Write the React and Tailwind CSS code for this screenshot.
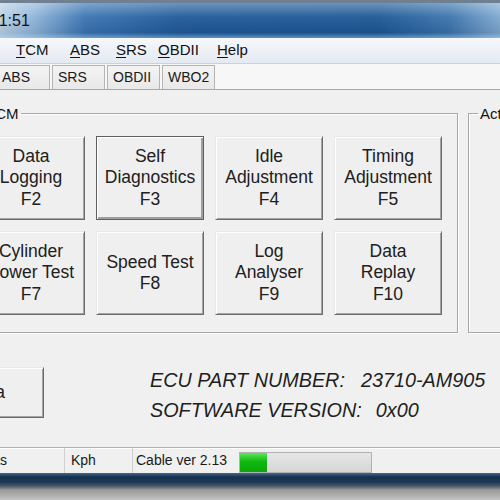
import React from 'react';

const row1 = [
  ['Data', 'Logging', 'F2'],
  ['Self', 'Diagnostics', 'F3'],
  ['Idle', 'Adjustment', 'F4'],
  ['Timing', 'Adjustment', 'F5'],
];

const row2 = [
  ['Cylinder', 'Power Test', 'F7'],
  ['Speed Test', 'F8'],
  ['Log', 'Analyser', 'F9'],
  ['Data', 'Replay', 'F10'],
];

// underlined letter, rest, slot width
const menus = [
  ['E', 'CM', 'w-[54px] ml-[-38px]'],
  ['T', 'CM', 'w-[54px]'],
  ['A', 'BS', 'w-[46px]'],
  ['S', 'RS', 'w-[42px]'],
  ['O', 'BDII', 'w-[59px]'],
  ['H', 'elp', 'w-[40px]'],
];

function FnButton({ lines, focused }) {
  const edge = focused
    ? 'border-[#5f5f5f] shadow-[inset_1px_1px_0_#ffffff,inset_-2px_-2px_0_#a0a0a0]'
    : 'border-t-[#e8e8e8] border-l-[#e8e8e8] border-r-[#6b6b6b] border-b-[#6b6b6b] shadow-[inset_1px_1px_0_#ffffff,inset_-1px_-1px_0_#a3a3a3]';
  return (
    <button
      className={`w-[108px] h-[84px] border bg-[#efefef] flex flex-col items-center justify-center text-[17.5px] leading-[21.5px] text-[#202020] ${edge}`}
    >
      {lines.map((l, i) => (
        <span key={i} className="whitespace-nowrap">{l}</span>
      ))}
    </button>
  );
}

export default function App() {
  return (
    <div
      className="w-[500px] h-[500px] overflow-hidden bg-[#f0f0f0] flex flex-col"
      style={{ fontFamily: '"Liberation Sans", Arial, sans-serif' }}
    >
      {/* title bar */}
      <div className="h-[38px] shrink-0 border-t-[3px] border-[#6e8092] bg-[linear-gradient(to_bottom,rgba(255,255,255,0.35),rgba(255,255,255,0.05)_40%,rgba(0,0,0,0.08)_85%,rgba(160,200,235,0.5)),linear-gradient(to_right,#b9d0e6_0px,#8db3d8_35px,#3a74b2_85px,#1f5a9a_180px,#1d5896_380px,#3b74ad_450px,#7ea8d0_500px)] flex items-center">
        <span className="ml-[-9px] text-[16px] text-[#111]">11:51</span>
      </div>

      {/* menu bar */}
      <div className="h-[26px] shrink-0 bg-[linear-gradient(to_bottom,#f6f8fb,#e4eaf2)] border-b border-[#c9d1dc] flex items-center text-[15px] text-[#111]">
        {menus.map(([u, rest, w], i) => (
          <span key={i} className={`shrink-0 whitespace-nowrap ${w}`}>
            <span className="underline underline-offset-2">{u}</span>
            {rest}
          </span>
        ))}
      </div>

      {/* tab strip */}
      <div className="h-[26px] shrink-0 bg-[#f7f7f7] border-b border-[#a8a8a8] flex items-end text-[14px] text-[#1a1a1a]">
        {['ABS', 'SRS', 'OBDII', 'WBO2'].map((t, i) => (
          <div
            key={t}
            className={`h-[24px] border border-b-0 border-[#b4b4b4] bg-[linear-gradient(to_bottom,#f4f4f4,#e8e8e8)] flex items-center pl-[5px] ${i === 0 ? 'ml-[-4px] w-[54px]' : 'ml-[2px] w-[53px]'}`}
          >
            {t}
          </div>
        ))}
      </div>

      {/* main panel */}
      <div className="h-[357px] shrink-0 overflow-hidden pt-[14px] flex flex-col">
        <div className="flex gap-[10px]">
          <fieldset className="shrink-0 ml-[-39px] w-[497px] h-[229px] border border-[#a6a6a6] shadow-[inset_1px_1px_0_#ffffff,1px_1px_0_#ffffff] px-[15px]">
            <legend className="ml-[7px] px-[2px] text-[15px] leading-[19px] text-[#111]">TCM</legend>
            <div className="mt-[13px] flex flex-col gap-[11px]">
              <div className="flex gap-[11px]">
                {row1.map((l, i) => (
                  <FnButton key={i} lines={l} focused={i === 1} />
                ))}
              </div>
              <div className="flex gap-[11px]">
                {row2.map((l, i) => (
                  <FnButton key={i} lines={l} />
                ))}
              </div>
            </div>
          </fieldset>
          <fieldset className="shrink-0 w-[120px] h-[229px] border border-[#a6a6a6] shadow-[inset_1px_1px_0_#ffffff,1px_1px_0_#ffffff] pl-[9px]">
            <legend className="px-[2px] text-[15px] leading-[19px] text-[#111] whitespace-nowrap">Active Tests</legend>
          </fieldset>
        </div>

        <div className="flex items-start">
          <button className="shrink-0 ml-[-60px] mt-[34px] w-[104px] h-[51px] border border-t-[#e8e8e8] border-l-[#e8e8e8] border-r-[#6b6b6b] border-b-[#6b6b6b] shadow-[inset_1px_1px_0_#ffffff,inset_-1px_-1px_0_#a3a3a3] bg-[#efefef] flex items-center justify-end pr-[38px] text-[17.5px] text-[#202020]">
            Data
          </button>
          <div className="ml-[106px] mt-[32px] text-[19.8px] leading-[30px] italic text-[#1e1e1e] whitespace-nowrap">
            <div>
              ECU PART NUMBER:<span className="ml-[16px]">23710-AM905</span>
            </div>
            <div>
              SOFTWARE VERSION:<span className="ml-[14px]">0x00</span>
            </div>
          </div>
        </div>
      </div>

      {/* status bar */}
      <div className="h-[26px] shrink-0 border-t border-[#b4b4b4] shadow-[inset_0_1px_0_#ffffff] bg-[#f0f0f0] flex items-stretch text-[14px] text-[#1a1a1a]">
        <div className="w-[65px] shrink-0 border-r border-[#d0d0d0] flex items-center justify-end pr-[57px]">Bias</div>
        <div className="w-[68px] shrink-0 border-r border-[#d0d0d0] flex items-center pl-[6px]">Kph</div>
        <div className="w-[106px] shrink-0 flex items-center pl-[3px] whitespace-nowrap">Cable ver 2.13</div>
        <div className="w-[133px] shrink-0 mt-[4px] border border-[#b2b2b2] bg-[linear-gradient(to_bottom,#e6e6e6,#d6d6d6)] flex">
          <div className="w-[27px] bg-[linear-gradient(to_bottom,#58e858,#10b810_45%,#0aa60a)]" />
        </div>
        <div className="flex-1" />
      </div>

      {/* window frame bottom */}
      <div className="h-[27px] shrink-0 bg-[linear-gradient(to_bottom,#46688c_0px,#15304f_4px,#1a3858_9px,#4a5866_13px,#9a9a9a_17px,#c2c2c2_27px)]" />
    </div>
  );
}
